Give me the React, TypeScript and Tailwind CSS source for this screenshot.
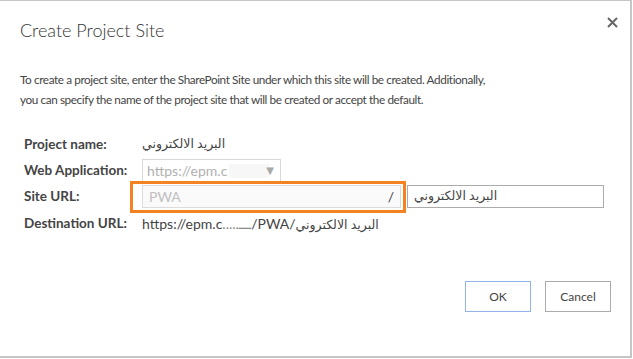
import React from "react";

const arabic = "البريد الالكتروني";

function Ar() {
  return <span className="text-[12.5px]">{arabic}</span>;
}

function Row({ label, children }: { label: string; children: React.ReactNode }) {
  return (
    <div className="flex items-center h-[23px]">
      <div className="w-[118px] shrink-0 font-bold text-[#444] text-[13.5px]">{label}</div>
      <div className="flex items-center text-[14px]">{children}</div>
    </div>
  );
}

export default function App() {
  return (
    <div
      className="w-[633px] h-[359px] bg-white overflow-hidden"
      style={{ fontFamily: 'Lato, "DejaVu Sans", sans-serif' }}
    >
      <div className="relative w-[632px] h-[358px] border-t border-r-2 border-b-2 border-[#c6c6c6] bg-white text-[#444]">
        {/* Header */}
        <div className="flex items-start justify-between pl-5 pr-[8px] pt-[16px]">
          <h1 className="text-[18px] font-light text-[#333]">Create Project Site</h1>
          <button className="mt-[-4px] p-1 text-[#666]">
            <svg width="11" height="11" viewBox="0 0 11 11">
              <path d="M1 1 L10 10 M10 1 L1 10" stroke="#666" strokeWidth="2" />
            </svg>
          </button>
        </div>

        {/* Description */}
        <p className="mt-[26px] px-5 text-[11.75px] leading-[20px] tracking-[-0.4px]">
          To create a project site, enter the SharePoint Site under which this site will be created. Additionally,
          <br />
          you can specify the name of the project site that will be created or accept the default.
        </p>

        {/* Form */}
        <div className="mt-[23px] pl-6 flex flex-col gap-[3px]">
          <Row label="Project name:">
            <Ar />
          </Row>
          <Row label="Web Application:">
            <div className="relative flex items-center w-[139px] h-[23px] border border-[#d9d9d9] px-[4px] text-[#b0b0b0]">
              <span>https://epm.c</span>
              <span className="ml-[2px] w-[40px] h-[14px] bg-[#f7f7f7]" />
              <span className="absolute right-[6px] top-[3px] text-[10px] text-[#a9a9a9]">▼</span>
            </div>
          </Row>
          <Row label="Site URL:">
            <div className="relative flex items-center">
              <div className="flex items-center justify-between w-[259px] h-[23px] border border-[#dcdcdc] bg-[#fafafa] px-[6px] text-[#c0c0c0]">
                <span className="text-[14px]">PWA</span>
                <span className="text-[#444]">/</span>
              </div>
              <div className="ml-[6px] flex items-center w-[197px] h-[23px] border border-[#ababab] px-[6px] text-[#444]">
                <Ar />
              </div>
              {/* highlight annotation */}
              <div className="absolute left-[-12px] top-[-4px] w-[276px] h-[32px] border-[3px] border-[#f58220]" />
            </div>
          </Row>
          <div className="mt-[1px]">
            <Row label="Destination URL:">
              <span>
                https://epm.c<span className="text-[#8a8a8a]">.....ـــ</span>/PWA/<Ar />
              </span>
            </Row>
          </div>
        </div>

        {/* Buttons */}
        <div className="absolute right-[19px] top-[280px] flex gap-[14px]">
          <button className="w-[66px] h-[31px] border border-[#92b4e8] text-[12px] text-[#444] bg-white">OK</button>
          <button className="w-[66px] h-[31px] border border-[#ababab] text-[12px] text-[#444] bg-white">Cancel</button>
        </div>
      </div>
    </div>
  );
}
